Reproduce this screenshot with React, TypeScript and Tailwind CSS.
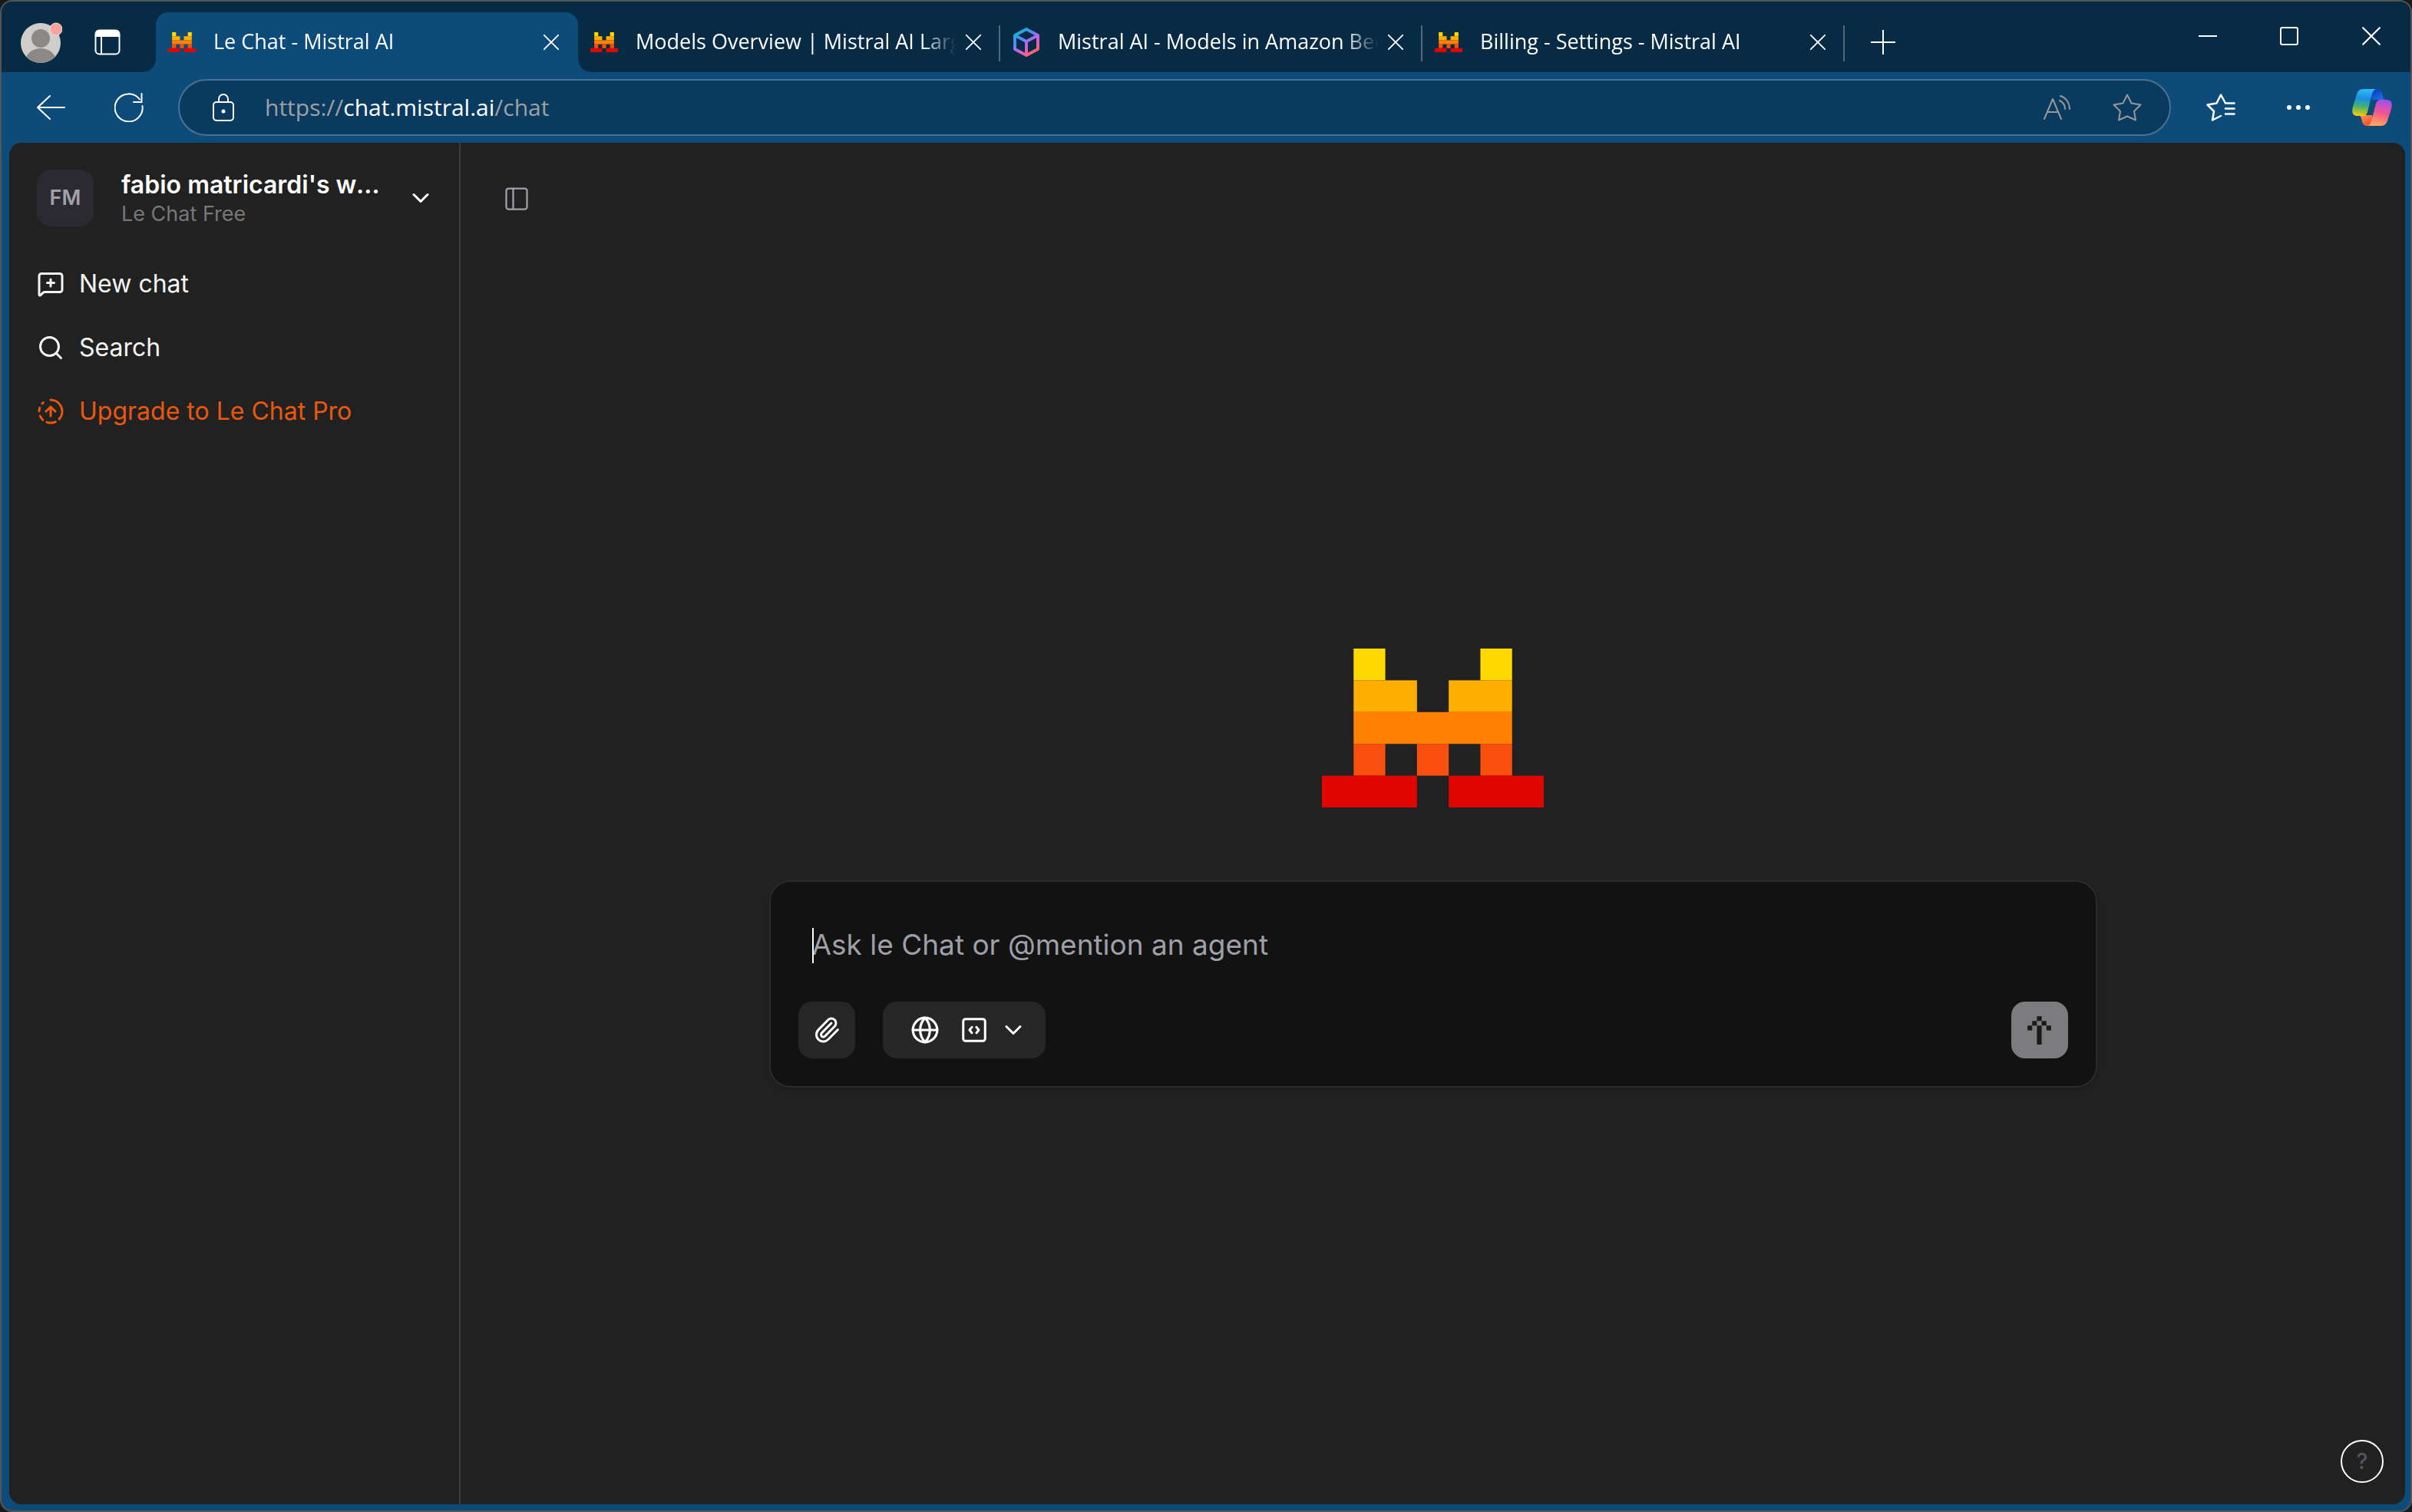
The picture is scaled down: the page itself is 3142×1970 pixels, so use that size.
import type { ReactNode } from "react";
import {
	ChevronDown,
	Globe,
	MessageSquarePlus,
	PanelLeft,
	Paperclip,
	Search,
} from "lucide-react";

type Tab = {
	title: string;
	icon: "mistral" | "bedrock";
	active?: boolean;
};

const tabs: Tab[] = [
	{ title: "Le Chat - Mistral AI", icon: "mistral", active: true },
	{ title: "Models Overview | Mistral AI Large", icon: "mistral" },
	{ title: "Mistral AI - Models in Amazon Bedrock", icon: "bedrock" },
	{ title: "Billing - Settings - Mistral AI", icon: "mistral" },
];

// rows of the 7x5 logo grid: [x, y, width, colour]
const logoCells: [number, number, number, string][] = [
	[1, 0, 1, "#ffd800"],
	[5, 0, 1, "#ffd800"],
	[1, 1, 2, "#ffaf00"],
	[4, 1, 2, "#ffaf00"],
	[1, 2, 5, "#ff8205"],
	[1, 3, 1, "#fa500f"],
	[3, 3, 1, "#fa500f"],
	[5, 3, 1, "#fa500f"],
	[0, 4, 3, "#e10500"],
	[4, 4, 3, "#e10500"],
];

function MistralLogo({ className }: { className?: string }) {
	return (
		<svg viewBox="0 0 7 5" preserveAspectRatio="none" className={className} aria-hidden="true">
			{logoCells.map(([x, y, w, fill]) => (
				<rect key={`${x}-${y}`} x={x} y={y} width={w} height={1} fill={fill} />
			))}
		</svg>
	);
}

function BedrockIcon() {
	return (
		<svg viewBox="0 0 34 38" className="w-[34px] h-[38px]" fill="none" aria-hidden="true">
			<defs>
				<linearGradient id="bedrock" x1="6" y1="2" x2="30" y2="36" gradientUnits="userSpaceOnUse">
					<stop offset="0" stopColor="#12b5c9" />
					<stop offset="0.3" stopColor="#4a8cf7" />
					<stop offset="0.6" stopColor="#d65be0" />
					<stop offset="1" stopColor="#ff6a3d" />
				</linearGradient>
			</defs>
			<path
				d="M17 2 32 10v18L17 36 2 28V10ZM2 10l15 8 15-8M17 18v18"
				stroke="url(#bedrock)"
				strokeWidth="4"
				strokeLinejoin="round"
			/>
		</svg>
	);
}

function CloseIcon({ className }: { className?: string }) {
	return (
		<svg viewBox="0 0 24 24" className={className} fill="none" stroke="currentColor" strokeWidth="2" aria-hidden="true">
			<path d="M2 2 22 22M22 2 2 22" strokeLinecap="round" />
		</svg>
	);
}

function CopilotIcon() {
	return (
		<svg viewBox="0 0 52 48" className="w-[52px] h-12" aria-hidden="true">
			<defs>
				<linearGradient id="cp-a" x1="14" y1="0" x2="10" y2="36" gradientUnits="userSpaceOnUse">
					<stop offset="0" stopColor="#2fb9f7" />
					<stop offset="0.35" stopColor="#1b8fe0" />
					<stop offset="0.65" stopColor="#4cb36b" />
					<stop offset="0.95" stopColor="#f2cb0a" />
				</linearGradient>
				<linearGradient id="cp-b" x1="42" y1="14" x2="34" y2="48" gradientUnits="userSpaceOnUse">
					<stop offset="0" stopColor="#a44df0" />
					<stop offset="0.5" stopColor="#f0568d" />
					<stop offset="1" stopColor="#ffa75c" />
				</linearGradient>
				<linearGradient id="cp-c" x1="28" y1="0" x2="36" y2="14" gradientUnits="userSpaceOnUse">
					<stop offset="0" stopColor="#0b35c2" />
					<stop offset="1" stopColor="#1773e0" />
				</linearGradient>
				<linearGradient id="cp-d" x1="14" y1="36" x2="22" y2="48" gradientUnits="userSpaceOnUse">
					<stop offset="0" stopColor="#ff8a45" />
					<stop offset="1" stopColor="#ee4a3a" />
				</linearGradient>
			</defs>
			<path d="M22 0h10c4 0 6 2 7 6l1 4c1 3 2 4 5 4H26Z" fill="url(#cp-c)" />
			<path d="M30 48H20c-4 0-6-2-7-6l-1-4c-1-3-2-4-5-4h19Z" fill="url(#cp-d)" />
			<path d="M14 0h18c-3 0-5 3-6 6l-6 24c-1 3-3 5-6 5H7c-6 0-8-4-6-12L6 7c1-4 4-7 8-7Z" fill="url(#cp-a)" />
			<path d="M38 48H19c3 0 5-3 6-6l6-23c1-3 3-5 6-5h8c6 0 8 4 6 12l-5 15c-1 4-4 7-8 7Z" fill="url(#cp-b)" />
		</svg>
	);
}

function BrowserTab({ tab }: { tab: Tab }) {
	return (
		<div
			className={`relative flex items-center h-[78px] flex-[0_1_550px] min-w-0 pl-4 pr-6 ${tab.active ? "bg-[#0c4b7a] rounded-t-2xl" : ""}`}
		>
			{tab.active && (
				<>
					<span className="absolute bottom-0 -left-4 size-4 bg-[radial-gradient(circle_at_0_0,transparent_15px,#0c4b7a_16px)]" />
					<span className="absolute bottom-0 -right-4 size-4 bg-[radial-gradient(circle_at_100%_0,transparent_15px,#0c4b7a_16px)]" />
				</>
			)}
			<span className="flex w-9 justify-center shrink-0">
				{tab.icon === "mistral" ? <MistralLogo className="w-9 h-[26px]" /> : <BedrockIcon />}
			</span>
			<a
				href="#tab"
				className="ml-[23px] mr-3 flex-1 min-w-0 overflow-hidden whitespace-nowrap pb-0.5 text-[27px] leading-9 text-white [mask-image:linear-gradient(to_right,black_calc(100%-44px),transparent)]"
			>
				{tab.title}
			</a>
			<button type="button" aria-label="Close tab" className="shrink-0 text-white">
				<CloseIcon className="size-[22px]" />
			</button>
			{!tab.active && <span className="absolute right-0 top-[17px] w-[2px] h-[47px] bg-[#52687a]" />}
		</div>
	);
}

function TitleBar() {
	return (
		<div className="flex items-start bg-[#072a45] h-[92px] pt-[14px]">
			<div className="flex items-center h-[78px] w-[201px] pl-[23px] gap-[42px] shrink-0">
				<button type="button" aria-label="Profile">
					<svg viewBox="0 0 56 56" className="size-14" aria-hidden="true">
						<defs>
							<clipPath id="avatar">
								<circle cx="28" cy="29" r="26" />
							</clipPath>
						</defs>
						<circle cx="28" cy="29" r="26" fill="#d0cecb" />
						<g clipPath="url(#avatar)" fill="#8b8886">
							<circle cx="28" cy="23" r="12" />
							<ellipse cx="28" cy="53" rx="20" ry="17" />
						</g>
						<circle cx="48" cy="11" r="8" fill="#fba49d" stroke="#e4e0dd" strokeWidth="1" />
					</svg>
				</button>
				<button type="button" aria-label="Tab actions" className="text-white">
					<svg viewBox="0 0 34 34" className="size-[34px]" fill="none" aria-hidden="true">
						<rect x="1.500" y="1.500" width="31" height="31" rx="5" stroke="currentColor" strokeWidth="2" />
						<path d="M1 10V6a5 5 0 0 1 5-5h22a5 5 0 0 1 5 5v4Z" fill="currentColor" />
						<path d="M9 10v22" stroke="currentColor" strokeWidth="2" />
					</svg>
				</button>
			</div>
			<nav aria-label="Tabs" className="flex flex-1 min-w-0">
				{tabs.map((tab) => (
					<BrowserTab key={tab.title} tab={tab} />
				))}
				<button type="button" aria-label="New tab" className="ml-[34px] h-[78px] text-white shrink-0">
					<svg viewBox="0 0 32 32" className="size-8" stroke="currentColor" strokeWidth="2" aria-hidden="true">
						<path d="M16 0v32M0 16h32" />
					</svg>
				</button>
			</nav>
			<div className="flex items-center gap-[82px] pt-[18px] pr-[38px] text-white shrink-0">
				<button type="button" aria-label="Minimize">
					<svg viewBox="0 0 24 24" className="size-6" stroke="currentColor" strokeWidth="2" aria-hidden="true">
						<path d="M0 12h24" />
					</svg>
				</button>
				<button type="button" aria-label="Maximize">
					<svg viewBox="0 0 24 24" className="size-6" fill="none" stroke="currentColor" strokeWidth="2" aria-hidden="true">
						<rect x="1" y="1" width="22" height="22" rx="2" />
					</svg>
				</button>
				<button type="button" aria-label="Close window">
					<CloseIcon className="size-[26px]" />
				</button>
			</div>
		</div>
	);
}

function AddressBar() {
	return (
		<div className="flex items-center h-[92px] pl-[45px] pr-6 text-white">
			<button type="button" aria-label="Back">
				<svg viewBox="0 0 38 34" className="w-[38px] h-[34px]" fill="none" stroke="currentColor" strokeWidth="2" strokeLinecap="round" strokeLinejoin="round" aria-hidden="true">
					<path d="M37 17H2M18 2 2 17l16 15" />
				</svg>
			</button>
			<button type="button" aria-label="Refresh" className="ml-16">
				<svg viewBox="0 0 38 38" className="size-[38px]" fill="none" stroke="currentColor" strokeWidth="2" strokeLinecap="round" aria-hidden="true">
					<path d="M36.500 17A18 18 0 1 1 33 8.500M35.500 1v11H25" />
				</svg>
			</button>
			<div className="ml-[45px] flex flex-1 min-w-0 items-center h-[74px] rounded-full border-2 border-[#4c718f] bg-[#093b60] pl-[43px] pr-9">
				<svg viewBox="0 0 28 36" className="w-7 h-9 shrink-0" fill="none" stroke="currentColor" strokeWidth="2" aria-hidden="true">
					<rect x="1" y="11" width="26" height="24" rx="4" />
					<path d="M8 11V7a6 6 0 0 1 12 0v4" />
					<circle cx="14" cy="23" r="1.500" fill="currentColor" />
				</svg>
				<a href="https://chat.mistral.ai/chat" className="ml-10 flex-1 text-[30px] leading-10 text-[#a0a0a0]">
					https://<span className="text-white">chat.mistral.ai</span>/chat
				</a>
				<button type="button" aria-label="Read aloud" className="text-[#979797]">
					<svg viewBox="0 0 36 34" className="w-9 h-[34px]" fill="none" stroke="currentColor" strokeWidth="2" strokeLinecap="round" strokeLinejoin="round" aria-hidden="true">
						<path d="M1 32 12 6l11 26M5 23h14M22 2c7 2 12 9 12 17M21 8c4 2 7 6 7 11" />
					</svg>
				</button>
				<button type="button" aria-label="Add to favorites" className="ml-[54px] text-[#979797]">
					<svg viewBox="0 0 38 36" className="w-[38px] h-9" fill="none" stroke="currentColor" strokeWidth="2" strokeLinejoin="round" aria-hidden="true">
						<path d="M19 1.500 24.500 12.500 36.500 14.500 28 23 30 34.500 19 29.500 8 34.500 10 23 1.500 14.500 13.500 12.500Z" />
					</svg>
				</button>
			</div>
			<div className="flex items-center ml-[46px]">
				<button type="button" aria-label="Favorites">
					<svg viewBox="0 0 38 36" className="w-[38px] h-9" fill="none" stroke="currentColor" strokeWidth="2.500" strokeLinecap="round" strokeLinejoin="round" aria-hidden="true">
						<path d="M25 12.500 19 1.500 13.500 12.500 1.500 14.500 10 23 8 34.500 19 29M25 12.500H36.500M25 19.500H36.500M25 26.500H36.500" />
					</svg>
				</button>
				<button type="button" aria-label="Settings and more" className="ml-[66px]">
					<svg viewBox="0 0 32 8" className="w-8 h-2" fill="currentColor" aria-hidden="true">
						<circle cx="4" cy="4" r="3" />
						<circle cx="16" cy="4" r="3" />
						<circle cx="28" cy="4" r="3" />
					</svg>
				</button>
				<button type="button" aria-label="Copilot" className="ml-[54px]">
					<CopilotIcon />
				</button>
			</div>
		</div>
	);
}

function NavItem({ icon, label, className }: { icon: ReactNode; label: string; className?: string }) {
	return (
		<a href="#nav" className={`flex items-center gap-[19px] h-[83px] text-[32px] leading-10 ${className ?? "text-[#f4f4f5]"}`}>
			<span className="flex w-9 justify-center">{icon}</span>
			{label}
		</a>
	);
}

function Sidebar() {
	return (
		<aside className="w-[588px] shrink-0 border-r-2 border-[#3d3d3f] pl-9 pr-8">
			<button type="button" className="flex w-full items-center pt-8 text-left">
				<span className="flex items-center justify-center size-[74px] rounded-[18px] bg-[#2b2a32] text-[27px] font-semibold text-[#a1a1aa]">
					FM
				</span>
				<span className="ml-9 mr-7 flex-1 min-w-0 pt-1">
					<span className="block truncate text-[32px] leading-[38px] font-semibold text-white">
						fabio matricardi's workspace
					</span>
					<span className="block text-[27px] leading-[38px] text-[#77777a]">Le Chat Free</span>
				</span>
				<ChevronDown size={36} strokeWidth={2} className="shrink-0 text-white" />
			</button>
			<nav className="mt-[30px]">
				<NavItem icon={<MessageSquarePlus size={36} strokeWidth={2} />} label="New chat" />
				<NavItem icon={<Search size={36} strokeWidth={2} />} label="Search" />
				<NavItem
					className="text-[#ea580c]"
					label="Upgrade to Le Chat Pro"
					icon={
						<svg viewBox="0 0 24 24" className="size-9" fill="none" stroke="currentColor" strokeWidth="2" strokeLinecap="round" strokeLinejoin="round" aria-hidden="true">
							<path d="M12 2a10 10 0 0 1 7.380 16.750M2.500 8.875a10 10 0 0 0-.5 3M2.830 16a10 10 0 0 0 2.430 3.400M4.636 5.235a10 10 0 0 1 .891-.857M8.644 21.420a10 10 0 0 0 7.631-.380M16 12l-4-4-4 4M12 16V8" />
						</svg>
					}
				/>
			</nav>
		</aside>
	);
}

function Composer() {
	return (
		<form
			className="w-full max-w-[1730px] rounded-[28px] border-2 border-[#2a2a31] bg-[#121212] px-9 pt-[52px] pb-9 shadow-md"
			onSubmit={(e) => e.preventDefault()}
		>
			<div className="relative px-[18px]">
				<span className="absolute left-[18px] top-2 w-[2px] h-[46px] bg-white" />
				<textarea
					rows={1}
					aria-label="Message"
					placeholder="Ask le Chat or @mention an agent"
					className="block w-full h-[60px] resize-none bg-transparent text-[37px] leading-[60px] text-white placeholder:text-[#9f9fa8] outline-none"
				/>
			</div>
			<div className="mt-11 flex items-center">
				<button type="button" aria-label="Attach file" className="flex items-center justify-center size-[74px] rounded-[18px] bg-[#262626] text-white">
					<Paperclip size={36} strokeWidth={2} />
				</button>
				<button type="button" aria-label="Tools" className="ml-9 flex items-center gap-[27px] h-[74px] pl-9 pr-6 rounded-[18px] bg-[#262626] text-white">
					<Globe size={38} strokeWidth={2} />
					<svg viewBox="0 0 24 24" className="size-9" fill="none" stroke="currentColor" strokeWidth="2" strokeLinecap="round" strokeLinejoin="round" aria-hidden="true">
						<rect x="2.500" y="2.500" width="19" height="19" rx="2" />
						<path d="m10 9.500-2 2.500 2 2.500M14 9.500l2 2.500-2 2.500" />
					</svg>
					<ChevronDown size={36} strokeWidth={2} className="-ml-3" />
				</button>
				<button type="submit" aria-label="Send" className="ml-auto flex items-center justify-center size-[74px] rounded-[18px] bg-[#7c7c7e] text-[#1a1a1b]">
					<svg viewBox="0 0 5 6" className="w-[31px] h-[37px]" fill="currentColor" aria-hidden="true">
						<path d="M2 0h1v1H2ZM1 1h1v1H1ZM3 1h1v1H3ZM0 2h1v1H0ZM4 2h1v1H4ZM2 2h1v4H2Z" />
					</svg>
				</button>
			</div>
		</form>
	);
}

export default function App() {
	return (
		<div className="min-h-screen flex bg-[#1a1a1a] font-['Open_Sans',sans-serif]">
			<div className="flex flex-1 flex-col min-w-0 overflow-hidden rounded-2xl border-2 border-[#555555] bg-[#0c4b7a]">
				<TitleBar />
				<AddressBar />
				<div className="flex flex-1 ml-[10px] mr-[7px] mb-2 rounded-2xl bg-[#212121] font-[Inter,sans-serif]">
					<Sidebar />
					<main className="relative flex flex-1 flex-col min-w-0">
						<header className="flex items-center h-[146px] px-[55px] shrink-0">
							<button type="button" aria-label="Toggle sidebar" className="text-[#a1a1aa]">
								<PanelLeft size={36} strokeWidth={1.5} />
							</button>
						</header>
						<div className="flex flex-1 flex-col items-center justify-center gap-[95px] px-12 pb-[30px]">
							<MistralLogo className="w-[289px] h-[207px]" />
							<Composer />
						</div>
						<button
							type="button"
							aria-label="Help"
							className="absolute bottom-7 right-7 flex items-center justify-center size-14 rounded-full border-2 border-white text-[28px] leading-none font-medium text-[#55555f]"
						>
							?
						</button>
					</main>
				</div>
			</div>
		</div>
	);
}
